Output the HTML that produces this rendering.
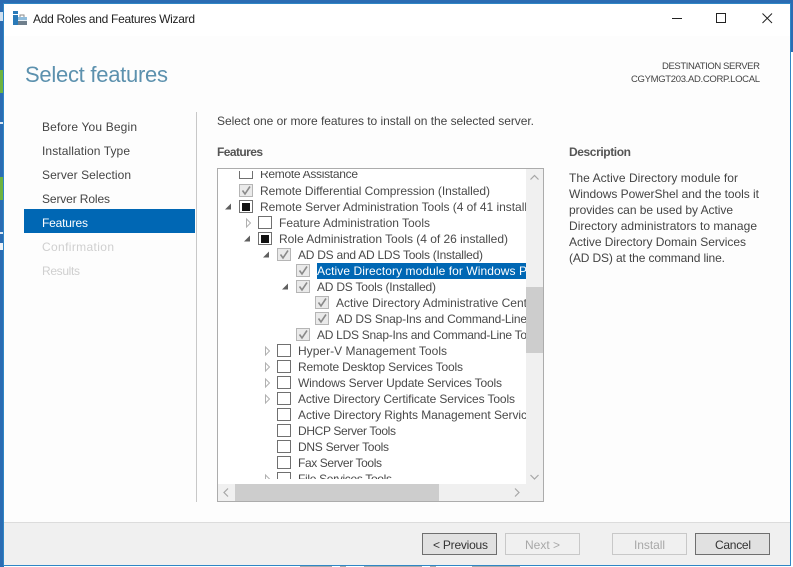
<!DOCTYPE html>
<html><head><meta charset="utf-8"><style>
html,body{margin:0;padding:0;background:#fff;width:793px;height:567px;overflow:hidden}
svg{display:block}
text{font-family:"Liberation Sans",sans-serif;font-size:12px;fill:#444}
.d{fill:#cfcfcf}
.w{fill:#fff}
.t text{fill:#4a4a4a}
.cb{fill:#fff;stroke:#707070;stroke-width:1}
.cg{fill:#eaeaea;stroke:#b5b5b5;stroke-width:1}
.ck{fill:none;stroke:#8a8a8a;stroke-width:1.6}
.fa{fill:#5f5f5f}
.ea{fill:#fff;stroke:#b0b0b0;stroke-width:1}
</style></head><body>
<svg width="793" height="567" viewBox="0 0 793 567" xmlns="http://www.w3.org/2000/svg">
<rect width="793" height="567" fill="#fff"/>
<!-- background -->
<rect x="0" y="0" width="793" height="4" fill="#2b6cb3"/>
<rect x="0" y="0" width="4" height="567" fill="#2b6cb3"/>
<rect x="790" y="0" width="3" height="52" fill="#2b6cb3"/>
<rect x="0" y="70" width="3" height="23" fill="#6db33f"/>
<rect x="0" y="177" width="3" height="23" fill="#6db33f"/>
<rect x="0" y="122" width="3" height="2" fill="#dfe8f2"/>
<rect x="0" y="232" width="3" height="2" fill="#dfe8f2"/>
<rect x="0" y="243" width="3" height="7" fill="#eef3f8"/>
<rect x="0" y="12" width="3" height="9" fill="#cfe0f0"/>
<!-- window -->
<rect x="3.500" y="3.500" width="787" height="562" fill="#fdfdfd" stroke="#2f86c5"/>
<rect x="4" y="4" width="786" height="32" fill="#fff"/>
<!-- bottom leftovers -->
<g fill="#aaa"><rect x="300" y="566" width="32" height="1"/><rect x="340" y="566" width="6" height="1"/><rect x="364" y="566" width="58" height="1"/><rect x="430" y="566" width="6" height="1"/><rect x="472" y="566" width="48" height="1"/></g>
<!-- title bar -->
<g>
<rect x="13" y="11" width="5" height="3" fill="#2a7ab8"/>
<rect x="13" y="15" width="5" height="10" fill="#2a7ab8"/>
<path d="M20 17 V15 H24 V17" fill="none" stroke="#8a8a8a" stroke-width="1"/>
<rect x="18" y="17" width="9" height="3" fill="#8fbcdc"/>
<rect x="18" y="20" width="9" height="1" fill="#e8f0f6"/>
<rect x="18" y="21" width="9" height="4" fill="#6f7f8c"/>
</g>
<text x="33" y="23" textLength="162" style="fill:#222">Add Roles and Features Wizard</text>
<rect x="672" y="18" width="10" height="1" fill="#222"/>
<rect x="716.500" y="13.500" width="9" height="9" fill="none" stroke="#222"/>
<path d="M762.500 13.500 L772 23 M772 13.500 L762.500 23" stroke="#222" fill="none"/>
<!-- header -->
<text x="25" y="82" textLength="143" style="font-size:22px;fill:#5c91ae">Select features</text>
<text x="662" y="69" textLength="98" style="font-size:9.500px;fill:#444">DESTINATION SERVER</text>
<text x="631" y="82" textLength="129" style="font-size:9.500px;fill:#444">CGYMGT203.AD.CORP.LOCAL</text>
<!-- nav -->
<rect x="24" y="209" width="171" height="24" fill="#0067b4"/>
<text x="42" y="131" textLength="95">Before You Begin</text>
<text x="42" y="155" textLength="88">Installation Type</text>
<text x="42" y="179" textLength="89">Server Selection</text>
<text x="42" y="203" textLength="68">Server Roles</text>
<text x="42" y="227" textLength="46" class="w">Features</text>
<text x="42" y="251" textLength="72" class="d">Confirmation</text>
<text x="42" y="275" textLength="38" class="d">Results</text>
<rect x="196" y="112" width="1" height="390" fill="#c8c8c8"/>
<!-- main -->
<text x="217" y="125" textLength="317">Select one or more features to install on the selected server.</text>
<text x="217" y="156" textLength="46" style="font-weight:bold;fill:#555">Features</text>
<text x="569" y="156" textLength="62" style="font-weight:bold;fill:#555">Description</text>
<text x="569" y="182" textLength="169">The Active Directory module for</text>
<text x="569" y="198" textLength="190">Windows PowerShel and the tools it</text>
<text x="569" y="214" textLength="164">provides can be used by Active</text>
<text x="569" y="230" textLength="188">Directory administrators to manage</text>
<text x="569" y="246" textLength="177">Active Directory Domain Services</text>
<text x="569" y="262" textLength="156">(AD DS) at the command line.</text>
<!-- tree box -->
<rect x="217.500" y="168.500" width="326" height="333" fill="#fff" stroke="#acacac"/>
<svg x="218" y="171" width="308" height="308" viewBox="218 171 308 308" class="t">
<rect x="317" y="263" width="209" height="16" fill="#0067b4"/>
<!-- row 175 -->
<rect class="cb" x="239.500" y="166.500" width="13" height="12"/>
<text x="260" y="178" textLength="98">Remote Assistance</text>
<!-- 191 -->
<rect class="cg" x="239.500" y="184.500" width="13" height="12"/><path class="ck" d="M242.500 190.500 L245 194 L250 186.500"/>
<text x="260" y="195" textLength="230">Remote Differential Compression (Installed)</text>
<!-- 207 -->
<path class="fa" d="M231 203.500 V209.500 H225Z"/>
<rect class="cb" x="239.500" y="200.500" width="13" height="12"/><rect x="242" y="203" width="8" height="8" fill="#111"/>
<text x="260" y="211" textLength="267">Remote Server Administration Tools (4 of 41 install</text>
<!-- 223 -->
<path class="ea" d="M246.500 219 L250.500 223 L246.500 227Z"/>
<rect class="cb" x="258.500" y="216.500" width="13" height="12"/>
<text x="279" y="227" textLength="151">Feature Administration Tools</text>
<!-- 239 -->
<path class="fa" d="M250 235.500 V241.500 H244Z"/>
<rect class="cb" x="258.500" y="232.500" width="13" height="12"/><rect x="261" y="235" width="8" height="8" fill="#111"/>
<text x="279" y="243" textLength="229">Role Administration Tools (4 of 26 installed)</text>
<!-- 255 -->
<path class="fa" d="M269 251.500 V257.500 H263Z"/>
<rect class="cg" x="277.500" y="248.500" width="13" height="12"/><path class="ck" d="M280.500 254.500 L283 258 L288 250.500"/>
<text x="298" y="259" textLength="185">AD DS and AD LDS Tools (Installed)</text>
<!-- 271 -->
<rect class="cg" x="296.500" y="264.500" width="13" height="12"/><path class="ck" d="M299.500 270.500 L302 274 L307 266.500"/>
<text x="317" y="275" textLength="210" style="fill:#fff">Active Directory module for Windows P</text>
<!-- 287 -->
<path class="fa" d="M288 283.500 V289.500 H282Z"/>
<rect class="cg" x="296.500" y="280.500" width="13" height="12"/><path class="ck" d="M299.500 286.500 L302 290 L307 282.500"/>
<text x="317" y="291" textLength="119">AD DS Tools (Installed)</text>
<!-- 303 -->
<rect class="cg" x="315.500" y="296.500" width="13" height="12"/><path class="ck" d="M318.500 302.500 L321 306 L326 298.500"/>
<text x="336" y="307" textLength="191">Active Directory Administrative Cent</text>
<!-- 319 -->
<rect class="cg" x="315.500" y="312.500" width="13" height="12"/><path class="ck" d="M318.500 318.500 L321 322 L326 314.500"/>
<text x="336" y="323" textLength="191">AD DS Snap-Ins and Command-Line</text>
<!-- 335 -->
<rect class="cg" x="296.500" y="328.500" width="13" height="12"/><path class="ck" d="M299.500 334.500 L302 338 L307 330.500"/>
<text x="317" y="339" textLength="210">AD LDS Snap-Ins and Command-Line To</text>
<!-- 351 -->
<path class="ea" d="M265.500 347 L269.500 351 L265.500 355Z"/>
<rect class="cb" x="277.500" y="344.500" width="13" height="12"/>
<text x="298" y="355" textLength="149">Hyper-V Management Tools</text>
<!-- 367 -->
<path class="ea" d="M265.500 363 L269.500 367 L265.500 371Z"/>
<rect class="cb" x="277.500" y="360.500" width="13" height="12"/>
<text x="298" y="371" textLength="165">Remote Desktop Services Tools</text>
<!-- 383 -->
<path class="ea" d="M265.500 379 L269.500 383 L265.500 387Z"/>
<rect class="cb" x="277.500" y="376.500" width="13" height="12"/>
<text x="298" y="387" textLength="204">Windows Server Update Services Tools</text>
<!-- 399 -->
<path class="ea" d="M265.500 395 L269.500 399 L265.500 403Z"/>
<rect class="cb" x="277.500" y="392.500" width="13" height="12"/>
<text x="298" y="403" textLength="217">Active Directory Certificate Services Tools</text>
<!-- 415 -->
<rect class="cb" x="277.500" y="408.500" width="13" height="12"/>
<text x="298" y="419" textLength="229">Active Directory Rights Management Servic</text>
<!-- 431 -->
<rect class="cb" x="277.500" y="424.500" width="13" height="12"/>
<text x="298" y="435" textLength="98">DHCP Server Tools</text>
<!-- 447 -->
<rect class="cb" x="277.500" y="440.500" width="13" height="12"/>
<text x="298" y="451" textLength="91">DNS Server Tools</text>
<!-- 463 -->
<rect class="cb" x="277.500" y="456.500" width="13" height="12"/>
<text x="298" y="467" textLength="84">Fax Server Tools</text>
<!-- 479 -->
<path class="ea" d="M265.500 475 L269.500 479 L265.500 483Z"/>
<rect class="cb" x="277.500" y="472.500" width="13" height="12"/>
<text x="298" y="483" textLength="94">File Services Tools</text>
</svg>
<!-- scrollbars -->
<rect x="526" y="169" width="17" height="332" fill="#f0f0f0"/>
<rect x="218" y="484" width="325" height="17" fill="#f0f0f0"/>
<rect x="526" y="287" width="17" height="66" fill="#cdcdcd"/>
<rect x="235" y="484" width="204" height="17" fill="#cdcdcd"/>
<path d="M530.500 179.500 L534.500 175.500 L538.500 179.500" fill="none" stroke="#a6a6a6" stroke-width="1.200"/>
<path d="M530.500 475 L534.500 479 L538.500 475" fill="none" stroke="#a6a6a6" stroke-width="1.200"/>
<path d="M228 488.500 L224 492.500 L228 496.500" fill="none" stroke="#a6a6a6" stroke-width="1.200"/>
<path d="M515 488.500 L519 492.500 L515 496.500" fill="none" stroke="#a6a6a6" stroke-width="1.200"/>
<!-- footer -->
<rect x="4" y="522" width="786" height="43" fill="#f0f0f0"/>
<rect x="4" y="522" width="786" height="1" fill="#dcdcdc"/>
<rect x="422.500" y="533.500" width="74" height="21" fill="#e1e1e1" stroke="#6f6f6f"/>
<text x="433" y="549" textLength="55" style="fill:#333">&lt; Previous</text>
<rect x="505.500" y="533.500" width="74" height="21" fill="#f0f0f0" stroke="#c8c8c8"/>
<text x="525" y="549" textLength="35" style="fill:#a8a8a8">Next &gt;</text>
<rect x="612.500" y="533.500" width="74" height="21" fill="#f0f0f0" stroke="#c8c8c8"/>
<text x="634" y="549" textLength="31" style="fill:#a8a8a8">Install</text>
<rect x="695.500" y="533.500" width="74" height="21" fill="#e1e1e1" stroke="#6f6f6f"/>
<text x="715" y="549" textLength="36" style="fill:#333">Cancel</text>
</svg>
</body></html>
